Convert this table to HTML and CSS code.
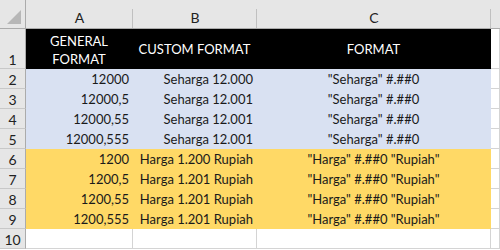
FILE: index.html
```html
<!DOCTYPE html>
<html lang="en">
<head>
    <meta charset="UTF-8">
    <title>Format Harga</title>
    <link rel="stylesheet" href="styles.css">
</head>
<body>
    <div class="sheet">
        <!-- column letters -->
        <div class="corner"><span class="tri"></span></div>
        <div class="colhead">A</div>
        <div class="colhead">B</div>
        <div class="colhead">C</div>
        <div class="colhead last"></div>

        <div class="rowhead tall">1</div>
        <div class="cell title two">GENERAL<br>FORMAT</div>
        <div class="cell title">CUSTOM FORMAT</div>
        <div class="cell title">FORMAT</div>
        <div class="cell blank"></div>

        <div class="rowhead">2</div>
        <div class="cell blue num">12000</div>
        <div class="cell blue num">Seharga 12.000</div>
        <div class="cell blue mid">"Seharga" #.##0</div>
        <div class="cell blank"></div>

        <div class="rowhead">3</div>
        <div class="cell blue num">12000,5</div>
        <div class="cell blue num">Seharga 12.001</div>
        <div class="cell blue mid">"Seharga" #.##0</div>
        <div class="cell blank"></div>

        <div class="rowhead">4</div>
        <div class="cell blue num">12000,55</div>
        <div class="cell blue num">Seharga 12.001</div>
        <div class="cell blue mid">"Seharga" #.##0</div>
        <div class="cell blank"></div>

        <div class="rowhead">5</div>
        <div class="cell blue num">12000,555</div>
        <div class="cell blue num">Seharga 12.001</div>
        <div class="cell blue mid">"Seharga" #.##0</div>
        <div class="cell blank"></div>

        <div class="rowhead">6</div>
        <div class="cell gold num">1200</div>
        <div class="cell gold num">Harga 1.200 Rupiah</div>
        <div class="cell gold mid">"Harga" #.##0 "Rupiah"</div>
        <div class="cell blank"></div>

        <div class="rowhead">7</div>
        <div class="cell gold num">1200,5</div>
        <div class="cell gold num">Harga 1.201 Rupiah</div>
        <div class="cell gold mid">"Harga" #.##0 "Rupiah"</div>
        <div class="cell blank"></div>

        <div class="rowhead">8</div>
        <div class="cell gold num">1200,55</div>
        <div class="cell gold num">Harga 1.201 Rupiah</div>
        <div class="cell gold mid">"Harga" #.##0 "Rupiah"</div>
        <div class="cell blank"></div>

        <div class="rowhead">9</div>
        <div class="cell gold num">1200,555</div>
        <div class="cell gold num">Harga 1.201 Rupiah</div>
        <div class="cell gold mid">"Harga" #.##0 "Rupiah"</div>
        <div class="cell blank"></div>

        <div class="rowhead">10</div>
        <div class="cell blank"></div>
        <div class="cell blank"></div>
        <div class="cell blank"></div>
        <div class="cell blank"></div>
    </div>
</body>
</html>
```

FILE: styles.css
```css
body{
    margin: 0;
    background-color: #fff;
    font-family: Lato, "Liberation Sans", sans-serif;
    font-size: 13px;
    color: #1a1a1a;
    overflow: hidden;
}

.sheet{
    display: grid;
    grid-template-columns: 26px 107px 124px 234px 9px;
    grid-template-rows: 29px 40px repeat(9, 20px);
}

.sheet > div{
    box-sizing: border-box;
    display: flex;
    white-space: nowrap;
}

/* header strip */
.corner{
    background-color: #e6e6e6;
    border-right: 1px solid #ababab;
    border-bottom: 1px solid #ababab;
    position: relative;
}

.corner .tri{
    position: absolute;
    right: 4px;
    bottom: 4px;
    width: 0;
    height: 0;
    border-left: 14px solid transparent;
    border-bottom: 14px solid #b7b7b7;
}

.colhead{
    background-color: #e6e6e6;
    border-bottom: 1px solid #ababab;
    justify-content: center;
    align-items: flex-end;
    padding-bottom: 2px;
    font-size: 14px;
    color: #222;
    position: relative;
}

.colhead::after{
    content: "";
    position: absolute;
    right: 0;
    top: 9px;
    bottom: 0;
    width: 1px;
    background-color: #c0c0c0;
}

.colhead.last::after{
    display: none;
}

.rowhead{
    background-color: #e6e6e6;
    border-right: 1px solid #ababab;
    border-bottom: 1px solid #c8c8c8;
    justify-content: center;
    align-items: flex-end;
    padding-bottom: 0;
    font-size: 14px;
    color: #222;
}

/* cells */
.cell{
    border-right: 1px solid #d4d4d4;
    border-bottom: 1px solid #d4d4d4;
    align-items: flex-end;
    padding: 0 3px 1px;
}

.title{
    background-color: #000;
    border-color: #000;
    color: #fff;
    justify-content: center;
    align-items: center;
    text-align: center;
    line-height: 18px;
    padding-top: 2px;
}

.title.two{
    align-items: flex-end;
    padding-bottom: 0;
}

.blue{
    background-color: #d9e1f2;
    border-color: #d9e1f2;
}

.gold{
    background-color: #ffd966;
    border-color: #ffd966;
}

.num{
    justify-content: flex-end;
}

.mid{
    justify-content: center;
}
```
